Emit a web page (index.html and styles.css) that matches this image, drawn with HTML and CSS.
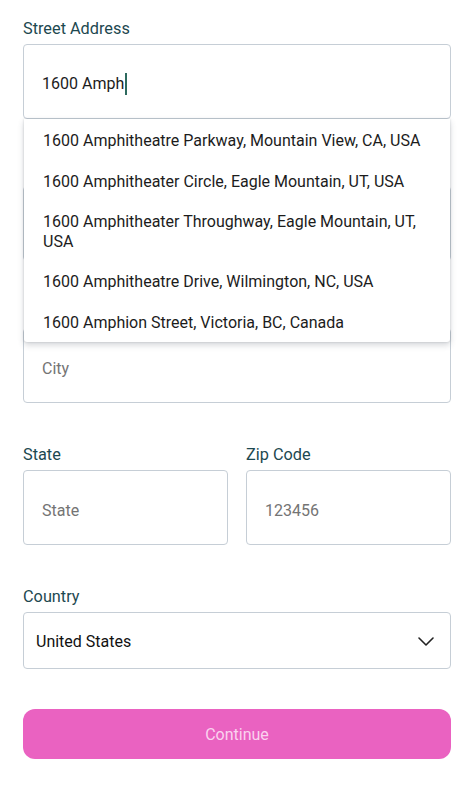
FILE: index.html
```html
<!DOCTYPE html>
<html lang="en">
<head>
<meta charset="utf-8">
<title>Address</title>
<link rel="stylesheet" href="styles.css">
</head>
<body>
<form class="form">
  <div class="field street">
    <label class="label">Street Address</label>
    <div class="input filled">1600 Amph<span class="caret"></span></div>
    <ul class="suggestions">
      <li>1600 Amphitheatre Parkway, Mountain View, CA, USA</li>
      <li>1600 Amphitheater Circle, Eagle Mountain, UT, USA</li>
      <li>1600 Amphitheater Throughway, Eagle Mountain, UT, USA</li>
      <li>1600 Amphitheatre Drive, Wilmington, NC, USA</li>
      <li>1600 Amphion Street, Victoria, BC, Canada</li>
    </ul>
  </div>
  <div class="field covered">
    <label class="label"></label>
    <div class="input"></div>
  </div>
  <div class="field">
    <label class="label"></label>
    <div class="input placeholder">City</div>
  </div>
  <div class="row">
    <div class="field">
      <label class="label">State</label>
      <div class="input placeholder">State</div>
    </div>
    <div class="field">
      <label class="label">Zip Code</label>
      <div class="input placeholder">123456</div>
    </div>
  </div>
  <div class="field">
    <label class="label">Country</label>
    <div class="select">
      <span>United States</span>
      <svg class="chevron" width="16" height="9" viewBox="0 0 16 9"><path d="M1 1l7 7 7-7" fill="none" stroke="#222" stroke-width="1.6" stroke-linecap="round" stroke-linejoin="round"/></svg>
    </div>
  </div>
  <button type="button" class="continue">Continue</button>
</form>
</body>
</html>
```
FILE: styles.css
```css
* { box-sizing: border-box; }
html, body { margin: 0; padding: 0; background: #ffffff; }
body {
  font-family: Roboto, "Noto Sans", "Liberation Sans", sans-serif;
  color: #1a1a1a;
  width: 474px;
  height: 785px;
  overflow: hidden;
}
.form {
  padding: 19px 23px 0 23px;
  display: flex;
  flex-direction: column;
  gap: 42px;
}
.field {
  position: relative;
  display: flex;
  flex-direction: column;
  gap: 5px;
}
.label {
  font-size: 16.3px;
  line-height: 20px;
  min-height: 20px;
  color: #1d4850;
}
.input {
  height: 75px;
  border: 1px solid #c6ced6;
  border-radius: 4px;
  display: flex;
  align-items: center;
  padding: 5px 0 0 18px;
  font-size: 16px;
  background: #fff;
}
.filled { color: #1c1c1c; padding-top: 4px; }
.placeholder { color: #747474; }
.caret {
  display: inline-block;
  width: 2px;
  height: 22px;
  background: #2d6a5e;
  margin-left: 1px;
}
.suggestions {
  position: absolute;
  top: 100px;
  left: 1px;
  right: 1px;
  margin: 0;
  padding: 1px 0 0;
  list-style: none;
  background: #fff;
  z-index: 10;
  box-shadow: 0 3px 6px rgba(60, 70, 80, 0.22), 0 0 2px rgba(60, 70, 80, 0.25);
  border-radius: 0 0 3px 3px;
}
.suggestions li {
  padding: 11px 22px 10px 19px;
  font-size: 16px;
  line-height: 19.5px;
  color: #1c1c1c;
}
.row {
  display: grid;
  grid-template-columns: 1fr 1fr;
  gap: 18px;
}
.select {
  height: 57px;
  border: 1px solid #c6ced6;
  border-radius: 4px;
  display: flex;
  align-items: center;
  justify-content: space-between;
  padding: 2px 16px 0 12px;
  font-size: 16px;
  color: #111;
}
.chevron { display: block; }
.continue {
  margin-top: -2px;
  height: 50px;
  border: none;
  border-radius: 12px;
  background: #ea62c1;
  color: #fad3ef;
  font-family: inherit;
  font-size: 16px;
  width: 100%;
}
```
